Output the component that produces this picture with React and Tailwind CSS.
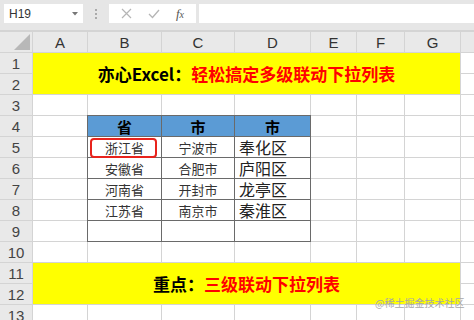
import React from 'react';

const cjk = { fontFamily: '"Noto Sans CJK SC", "Liberation Sans", sans-serif' };

const cols = ['A', 'B', 'C', 'D', 'E', 'F', 'G', ''];

const tableRows = [
  ['浙江省', '宁波市', '奉化区'],
  ['安徽省', '合肥市', '庐阳区'],
  ['河南省', '开封市', '龙亭区'],
  ['江苏省', '南京市', '秦淮区'],
  ['', '', ''],
];

const Blank = () => <div className="bg-white" />;

const RowHead = ({ n }) => (
  <div className="bg-[#e9e9e9] flex items-center justify-center text-[15px] text-[#444] leading-none" style={{ fontFamily: '"Liberation Sans", sans-serif' }}>
    {n}
  </div>
);

const FormulaBar = () => (
  <div className="h-[31px] bg-[#e6e6e6] flex items-start pt-[4px] pl-[4px] border-b border-[#d4d4d4]">
    {/* name box */}
    <div className="w-[79px] h-[19px] bg-white flex items-center justify-between px-[5px] text-[12px] text-[#333]" style={{ fontFamily: '"Liberation Sans", sans-serif' }}>
      <span>H19</span>
      <svg width="6" height="4" viewBox="0 0 6 4"><path d="M0 0h6L3 3.5z" fill="#777" /></svg>
    </div>
    <div className="w-[26px] h-[19px] flex flex-col items-center justify-center gap-[2px]">
      <span className="w-[2px] h-[2px] bg-[#aaa]" />
      <span className="w-[2px] h-[2px] bg-[#aaa]" />
      <span className="w-[2px] h-[2px] bg-[#aaa]" />
    </div>
    {/* cancel / enter / fx */}
    <div className="w-[87px] h-[19px] bg-white flex items-center justify-around px-[4px]">
      <svg width="11" height="11" viewBox="0 0 11 11"><path d="M1 1l9 9M10 1l-9 9" stroke="#b5b5b5" strokeWidth="1.2" /></svg>
      <svg width="12" height="10" viewBox="0 0 12 10"><path d="M1 5l3.5 3.5L11 1" stroke="#b5b5b5" strokeWidth="1.3" fill="none" /></svg>
      <span className="text-[13px] italic text-[#555] leading-none" style={{ fontFamily: '"Liberation Serif", serif' }}>
        f<span className="text-[10px]">x</span>
      </span>
    </div>
    <div className="ml-[3px] flex-1 h-[19px] bg-white" />
  </div>
);

const Table = () => (
  <div className="col-span-3 row-span-6 -m-px grid grid-cols-[73px_72px_75px] grid-rows-[repeat(6,20px)] gap-px bg-[#6a6a6a] border border-[#6a6a6a]" style={cjk}>
    {['省', '市', '市'].map((h, i) => (
      <div key={i} className="bg-[#5b9bd5] flex items-center justify-center text-[15px] font-bold text-black leading-none">{h}</div>
    ))}
    {tableRows.map((r, ri) => (
      <React.Fragment key={ri}>
        <div className="relative bg-white flex items-center justify-center text-[13px] text-[#333] leading-none">
          {r[0]}
          {ri === 0 && <div className="absolute left-[2px] right-[4px] top-[1px] bottom-[-1px] border-2 border-[#e8231c] rounded-[4px]" />}
        </div>
        <div className="bg-white flex items-center justify-center text-[13px] text-[#333] leading-none">{r[1]}</div>
        <div className="bg-white flex items-center pl-[4px] text-[16px] text-[#222] leading-none">{r[2]}</div>
      </React.Fragment>
    ))}
  </div>
);

const Banner = ({ black, red }) => (
  <div className="col-span-7 row-span-2 bg-[#ffff00] flex items-center justify-center text-[17px] font-bold leading-none" style={cjk}>
    <span className="text-black">{black}</span>
    <span className="text-[#ff0000]">{red}</span>
  </div>
);

export default function App() {
  const cells = [];
  for (let r = 1; r <= 13; r++) {
    cells.push(<RowHead key={`h${r}`} n={r} />);
    if (r === 1) {
      cells.push(<Banner key="b1" black="亦心Excel：" red="轻松搞定多级联动下拉列表" />);
      cells.push(<Blank key="x1" />);
    } else if (r === 11) {
      cells.push(<Banner key="b11" black="重点：" red="三级联动下拉列表" />);
      cells.push(<Blank key="x11" />);
    } else if (r === 2 || r === 12) {
      cells.push(<Blank key={`x${r}`} />);
    } else if (r === 4) {
      cells.push(<Blank key="a4" />);
      cells.push(<Table key="t" />);
      ['e', 'f', 'g', 'h'].forEach((c) => cells.push(<Blank key={`${c}4`} />));
    } else if (r >= 5 && r <= 9) {
      ['a', 'e', 'f', 'g', 'h'].forEach((c) => cells.push(<Blank key={`${c}${r}`} />));
    } else {
      cols.forEach((c, i) => cells.push(<Blank key={`${i}-${r}`} />));
    }
  }

  return (
    <div className="w-[474px] h-[320px] overflow-hidden bg-white relative">
      <FormulaBar />
      <div className="grid grid-cols-[32px_54px_73px_72px_75px_45px_47px_55px_1fr] grid-rows-[20px] auto-rows-[20px] gap-px bg-[#d4d4d4] pt-px">
        <div className="bg-[#e9e9e9] flex items-end justify-end p-[2px]">
          <svg width="16" height="16" viewBox="0 0 16 16"><path d="M16 0v16H0z" fill="#b8b8b8" /></svg>
        </div>
        {cols.map((c, i) => (
          <div key={i} className="bg-[#e9e9e9] flex items-center justify-center text-[15px] text-[#333] leading-none" style={{ fontFamily: '"Liberation Sans", sans-serif' }}>
            {c}
          </div>
        ))}
        {cells}
      </div>
      <div className="absolute left-[375px] top-[298px] text-[10px] text-[#a8a8a8] leading-none whitespace-nowrap" style={cjk}>
        @稀土掘金技术社区
      </div>
    </div>
  );
}
